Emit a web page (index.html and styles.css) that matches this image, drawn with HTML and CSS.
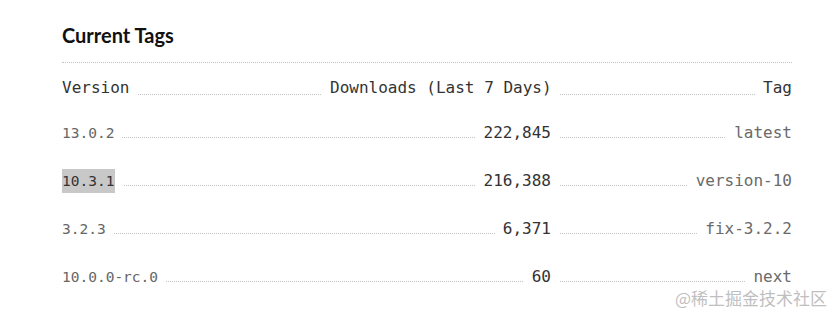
FILE: index.html
```html
<!DOCTYPE html>
<html lang="en">
<head>
<meta charset="utf-8">
<title>Current Tags</title>
<link rel="stylesheet" href="styles.css">
</head>
<body>
<section class="tags">
  <h3 class="tags-title">Current Tags</h3>
  <div class="tags-table">
    <div class="row row-head">
      <span class="cell c-version"><span class="txt">Version</span></span>
      <span class="cell c-dl"><span class="txt">Downloads (Last 7 Days)</span></span>
      <span class="cell c-tag"><span class="txt">Tag</span></span>
    </div>
    <div class="row">
      <span class="cell c-version"><span class="txt ver">13.0.2</span></span>
      <span class="cell c-dl"><span class="txt num">222,845</span></span>
      <span class="cell c-tag"><span class="txt tag">latest</span></span>
    </div>
    <div class="row">
      <span class="cell c-version"><span class="txt ver"><span class="hl">10.3.1</span></span></span>
      <span class="cell c-dl"><span class="txt num">216,388</span></span>
      <span class="cell c-tag"><span class="txt tag">version-10</span></span>
    </div>
    <div class="row">
      <span class="cell c-version"><span class="txt ver">3.2.3</span></span>
      <span class="cell c-dl"><span class="txt num">6,371</span></span>
      <span class="cell c-tag"><span class="txt tag">fix-3.2.2</span></span>
    </div>
    <div class="row">
      <span class="cell c-version"><span class="txt ver">10.0.0-rc.0</span></span>
      <span class="cell c-dl"><span class="txt num">60</span></span>
      <span class="cell c-tag"><span class="txt tag">next</span></span>
    </div>
  </div>
</section>
<div class="watermark">@稀土掘金技术社区</div>
</body>
</html>
```
FILE: styles.css
```css
html, body {
  margin: 0;
  padding: 0;
  background: #fff;
}
body {
  width: 840px;
  height: 320px;
  overflow: hidden;
  position: relative;
  font-family: "DejaVu Sans Mono", "Liberation Mono", monospace;
}
.tags {
  padding: 23px 0 0 62px;
  width: 730px;
}
.tags-title {
  margin: 0;
  font-family: "Lato", "Liberation Sans", sans-serif;
  font-weight: 700;
  font-size: 20px;
  line-height: 24px;
  color: #111;
  padding-bottom: 15px;
  border-bottom: 1px dotted #c4c4c4;
}
.row {
  display: grid;
  grid-template-columns: 260px 237px 1fr;
  height: 24px;
  padding: 13px 0 11px;
  line-height: 24px;
  background-image: repeating-linear-gradient(to right, #c4c4c4 0 1px, transparent 1px 2px);
  background-size: 100% 1px;
  background-repeat: no-repeat;
  background-position: 0 29px;
  background-origin: border-box;
}
.row-head {
  padding: 13px 0 8px;
  background-position: 0 31px;
  font-size: 16px;
  color: #333;
}
.cell {
  display: block;
  white-space: nowrap;
}
.c-dl, .c-tag {
  text-align: right;
}
.txt {
  display: inline-block;
  background: #fff;
}
.c-version .txt { padding-right: 8px; }
.c-dl .txt { padding: 0 8px; }
.c-tag .txt { padding-left: 8px; }
.ver {
  font-size: 14.5px;
  color: #666;
}
.num {
  font-size: 16px;
  color: #333;
}
.tag {
  font-size: 16px;
  color: #6a6a6a;
}
.hl {
  display: inline-block;
  background: #c8c8c8;
  color: #333;
  padding-right: 1px;
}
.watermark {
  position: absolute;
  right: 13px;
  top: 286px;
  font-family: "Noto Sans CJK SC", sans-serif;
  font-size: 17px;
  line-height: 24px;
  color: #bfbfbf;
  text-shadow: 0 0 1px #fff;
}
```
